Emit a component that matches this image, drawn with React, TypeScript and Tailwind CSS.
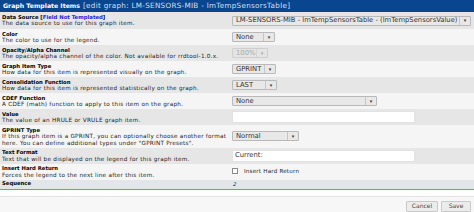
import React from 'react'

type Row = {
  title: React.ReactNode
  desc?: string[]
  control: React.ReactNode
  dark: boolean
}

function Select({ value, className, disabled }: { value: string; className: string; disabled?: boolean }) {
  return (
    <div
      className={`h-[10px] flex items-stretch border rounded-[1px] text-[6.8px] leading-none ${
        disabled ? 'border-[#cfcfcf] bg-[#e4e4e4] text-[#a8a8a8]' : 'border-[#b9b9b9] bg-[#e8e8e8] text-[#333]'
      } ${className}`}
    >
      <span className="flex-1 flex items-center pl-[3px] whitespace-nowrap">{value}</span>
      <span className={`w-[11px] flex items-center justify-center border-l text-[5px] ${disabled ? 'border-[#d4d4d4]' : 'border-[#c6c6c6]'}`}>
        ▾
      </span>
    </div>
  )
}

function TextInput({ value }: { value: string }) {
  return (
    <div className="h-[12px] w-[183px] bg-white border border-[#e2e2e2] flex items-center pl-[2px] text-[6.8px] text-[#333]">
      {value}
    </div>
  )
}

export default function App() {
  const rows: Row[] = [
    {
      title: (
        <>
          Data Source <span className="text-black">[</span>
          <span className="text-[#1d1dd8]">Field Not Templated</span>
          <span className="text-black">]</span>
        </>
      ),
      desc: ['The data source to use for this graph item.'],
      control: <Select value="LM-SENSORS-MIB - lmTempSensorsTable - (lmTempSensorsValue)" className="w-[239px]" />,
      dark: true
    },
    {
      title: 'Color',
      desc: ['The color to use for the legend.'],
      control: <Select value="None" className="w-[43px]" />,
      dark: false
    },
    {
      title: 'Opacity/Alpha Channel',
      desc: ['The opacity/alpha channel of the color. Not available for rrdtool-1.0.x.'],
      control: <Select value="100%" className="w-[36px]" disabled />,
      dark: true
    },
    {
      title: 'Graph Item Type',
      desc: ['How data for this item is represented visually on the graph.'],
      control: <Select value="GPRINT" className="w-[44px]" />,
      dark: false
    },
    {
      title: 'Consolidation Function',
      desc: ['How data for this item is represented statistically on the graph.'],
      control: <Select value="LAST" className="w-[45px]" />,
      dark: true
    },
    {
      title: 'CDEF Function',
      desc: ['A CDEF (math) function to apply to this item on the graph.'],
      control: <Select value="None" className="w-[145px]" />,
      dark: false
    },
    {
      title: 'Value',
      desc: ['The value of an HRULE or VRULE graph item.'],
      control: <TextInput value="" />,
      dark: true
    },
    {
      title: 'GPRINT Type',
      desc: [
        'If this graph item is a GPRINT, you can optionally choose another format',
        'here. You can define additional types under "GPRINT Presets".'
      ],
      control: <Select value="Normal" className="w-[67px]" />,
      dark: false
    },
    {
      title: 'Text Format',
      desc: ['Text that will be displayed on the legend for this graph item.'],
      control: <TextInput value="Current:" />,
      dark: true
    },
    {
      title: 'Insert Hard Return',
      desc: ['Forces the legend to the next line after this item.'],
      control: (
        <div className="flex items-center gap-[6px]">
          <span className="w-[6px] h-[6px] bg-white border border-[#8a8a8a]" />
          <span className="text-[5.6px] tracking-[0.2px] text-[#222]">Insert Hard Return</span>
        </div>
      ),
      dark: false
    }
  ]

  return (
    <div className="w-[474px] h-[212px] bg-white overflow-hidden font-['DejaVu_Sans',sans-serif]">
      {/* Header */}
      <div className="h-[12px] bg-[#0a4590] flex items-center pl-[3px] leading-none whitespace-nowrap">
        <span className="font-bold text-white text-[6.2px]">Graph Template Items</span>
        <span className="ml-[3px] text-[#d3e0f0] text-[7.2px] tracking-[0.3px]">[edit graph: LM-SENSORS-MIB - lmTempSensorsTable]</span>
      </div>

      {rows.map((row, i) => (
        <div
          key={i}
          className={`flex min-h-[16px] ${row.dark ? 'bg-[#e6e6e6]' : 'bg-[#f5f5f5]'} ${i === 0 ? 'h-[17px]' : ''}`}
        >
          <div className="w-[230px] pl-[2px] py-[1.5px] leading-[6.5px] text-[#222]">
            <div className="font-bold text-black whitespace-nowrap text-[5.3px]">{row.title}</div>
            {row.desc?.map((d, j) => (
              <div key={j} className="whitespace-nowrap text-[5.7px] tracking-[0.25px]">{d}</div>
            ))}
          </div>
          <div className="flex-1 flex items-center pl-[2px]">{row.control}</div>
        </div>
      ))}

      {/* Sequence */}
      <div className="flex h-[10px] bg-[#e3e6e8] border-b border-[#7d95b5]">
        <div className="w-[230px] pl-[2px] flex items-center text-[5.3px] font-bold text-black">Sequence</div>
        <div className="flex-1 flex items-center pl-[3px] text-[5.5px] italic text-[#333]">2</div>
      </div>

      {/* Buttons */}
      <div className="mt-[6px] h-[20px] bg-[#f7f7f7] border-t border-[#e4e4e4] flex items-center justify-end gap-[3px] pr-[3px]">
        <button className="h-[11px] w-[32px] bg-[#ececec] border border-[#c9c9c9] rounded-[1px] text-[6px] text-[#444] leading-none">
          Cancel
        </button>
        <button className="h-[11px] w-[30px] bg-[#ececec] border border-[#c9c9c9] rounded-[1px] text-[6px] text-[#444] leading-none">
          Save
        </button>
      </div>
    </div>
  )
}
